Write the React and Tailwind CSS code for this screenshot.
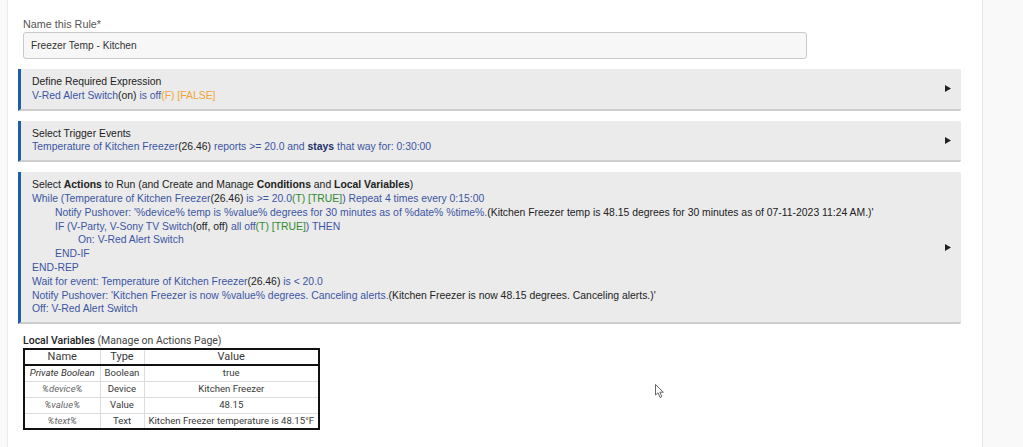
import React from 'react';

const blue = 'text-[#3b55a3]';

function Arrow() {
  return (
    <svg width="6" height="7" viewBox="0 0 6 7" className="shrink-0">
      <path d="M0 0 L6 3.5 L0 7 Z" fill="#222" />
    </svg>
  );
}

function Panel({ children }) {
  return (
    <div className="flex items-center bg-[#ebebeb] border-l-[3px] border-l-[#1f5fa8] border-b-2 border-b-[#cdcdcd] pl-[11px] pr-[10px] py-[6px] rounded-r-[2px]">
      <div className="flex-1 text-[10.4px] leading-[13.8px] text-[#222] whitespace-nowrap">{children}</div>
      <Arrow />
    </div>
  );
}

const vars = [
  { name: 'Private Boolean', type: 'Boolean', value: 'true', dark: true },
  { name: '%device%', type: 'Device', value: 'Kitchen Freezer' },
  { name: '%value%', type: 'Value', value: '48.15' },
  { name: '%text%', type: 'Text', value: 'Kitchen Freezer temperature is 48.15°F' },
];

export default function App() {
  return (
    <div className="relative h-[447px] w-[1023px] overflow-hidden bg-white flex font-['Liberation_Sans',Arial,sans-serif]">
      <div className="w-[8px] bg-[#fafafa] border-r border-[#ececec]" />
      <div className="w-[974px] pl-[10px] pr-[21px]">
        <div className="pl-[5px] pt-[17px]">
          <div className="text-[10.8px] leading-[15px] text-[#555]">Name this Rule*</div>
          <div className="w-[784px] h-[27px] bg-[#f7f7f7] border border-[#c9c9c9] rounded-[3px] flex items-center pl-[7px] text-[10.2px] text-[#333]">
            Freezer Temp - Kitchen
          </div>
        </div>

        <div className="mt-[10px] flex flex-col gap-[10px]">
          <Panel>
            <div>Define Required Expression</div>
            <div className={blue}>
              V-Red Alert Switch<span className="text-[#222]">(on)</span> is off<span className="text-[#f0a438]">(F) [FALSE]</span>
            </div>
          </Panel>

          <Panel>
            <div>Select Trigger Events</div>
            <div className={blue}>
              Temperature of Kitchen Freezer<span className="text-[#222]">(26.46)</span> reports &gt;= 20.0 and <b className="text-[#23306b]">stays</b> that way for: 0:30:00
            </div>
          </Panel>

          <Panel>
            <div>
              Select <b>Actions</b> to Run (and Create and Manage <b>Conditions</b> and <b>Local Variables</b>)
            </div>
            <div className={blue}>
              While (Temperature of Kitchen Freezer<span className="text-[#222]">(26.46)</span> is &gt;= 20.0<span className="text-[#2f8a2f]">(T) [TRUE]</span>) Repeat 4 times every 0:15:00
            </div>
            <div className={`${blue} pl-[23px]`}>
              Notify Pushover: '%device% temp is %value% degrees for 30 minutes as of %date% %time%.<span className="text-[#222]">(Kitchen Freezer temp is 48.15 degrees for 30 minutes as of 07-11-2023 11:24 AM.)'</span>
            </div>
            <div className={`${blue} pl-[23px]`}>
              IF (V-Party, V-Sony TV Switch<span className="text-[#222]">(off, off)</span> all off<span className="text-[#2f8a2f]">(T) [TRUE]</span>) THEN
            </div>
            <div className={`${blue} pl-[46px]`}>On: V-Red Alert Switch</div>
            <div className={`${blue} pl-[23px]`}>END-IF</div>
            <div className={blue}>END-REP</div>
            <div className={blue}>
              Wait for event: Temperature of Kitchen Freezer<span className="text-[#222]">(26.46)</span> is &lt; 20.0
            </div>
            <div className={blue}>
              Notify Pushover: 'Kitchen Freezer is now %value% degrees. Canceling alerts.<span className="text-[#222]">(Kitchen Freezer is now 48.15 degrees. Canceling alerts.)'</span>
            </div>
            <div className={blue}>Off: V-Red Alert Switch</div>
          </Panel>
        </div>

        <div className="pl-[5px] mt-[10px] font-['Roboto',sans-serif]">
          <div className="text-[10.5px] leading-[13px] text-[#444]">
            <span className="font-medium text-[#222]">Local Variables</span> (Manage on Actions Page)
          </div>
          <table className="mt-[1px] border-2 border-[#111] border-collapse text-[9.6px] leading-[12px] text-[#3a3a3a]">
            <thead>
              <tr className="border-b-2 border-[#111]">
                <th className="w-[76px] font-normal text-[11px] h-[16px] p-0 border-r border-[#ddd]">Name</th>
                <th className="w-[44px] font-normal text-[11px] p-0 border-r border-[#ddd]">Type</th>
                <th className="w-[175px] font-normal text-[11px] p-0">Value</th>
              </tr>
            </thead>
            <tbody>
              {vars.map((v) => (
                <tr key={v.name} className="border-b border-[#ddd] last:border-b-0">
                  <td className={`h-[16px] p-0 text-center italic border-r border-[#ddd] whitespace-nowrap ${v.dark ? 'text-[#333]' : 'text-[#666]'}`}>{v.name}</td>
                  <td className="p-0 text-center border-r border-[#ddd]">{v.type}</td>
                  <td className="p-0 text-center whitespace-nowrap">{v.value}</td>
                </tr>
              ))}
            </tbody>
          </table>
        </div>
      </div>
      <div className="flex-1 bg-[#f9f9f9] border-l border-[#e6e6e6]" />

      <svg className="absolute left-[655px] top-[384px]" width="10" height="15" viewBox="0 0 10 15">
        <path d="M0.5 0.5 L0.5 11 L3 8.8 L5 13.5 L6.8 12.7 L4.9 8.2 L8.3 8.2 Z" fill="#fff" stroke="#555" strokeWidth="0.9" />
      </svg>
    </div>
  );
}
